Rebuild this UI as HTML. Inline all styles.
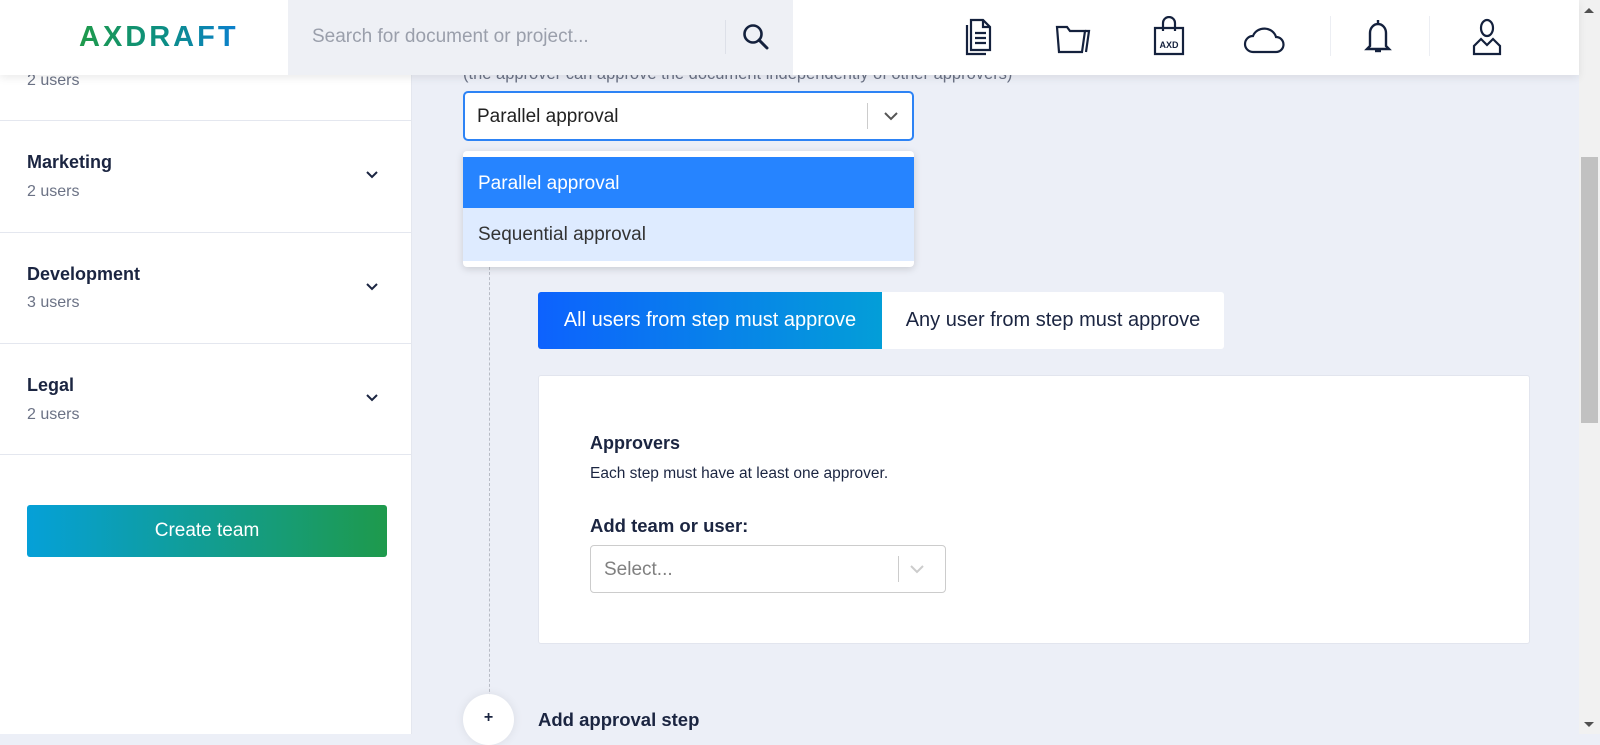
<!DOCTYPE html>
<html><head><meta charset="utf-8"><style>
*{box-sizing:border-box;margin:0;padding:0}
body{width:1600px;height:734px;overflow:hidden;background:#eceff7;font-family:"Liberation Sans",sans-serif;color:#1b2541;position:relative}
.abs{position:absolute}
#hdr{left:0;top:0;width:1579px;height:75px;background:#fff;box-shadow:0 3px 8px rgba(0,0,0,.08);z-index:5}
#search{left:288px;top:0;width:505px;height:75px;background:#eef0f5}
#side{left:0;top:0;width:412px;height:734px;background:#fff;border-right:1px solid #e4e7ef}
.row{position:absolute;left:0;width:411px;border-bottom:1px solid #e4e7ef}
.t{position:absolute;left:27px;font-size:18px;font-weight:bold;color:#1b2541}
.u{position:absolute;left:27px;font-size:16px;color:#6b7285}
.chev{position:absolute;left:365px}
#sb{left:1579px;top:0;width:21px;height:734px;background:#f1f1f1}
</style></head><body>
<div id="side" class="abs">
 <div class="u" style="top:72px">2 users</div>
 <div class="row" style="top:0;height:121px"></div>
 <div class="t" style="top:152px">Marketing</div><div class="u" style="top:183px">2 users</div>
 <div class="row" style="top:121px;height:112px"></div>
 <div class="t" style="top:264px">Development</div><div class="u" style="top:294px">3 users</div>
 <div class="row" style="top:233px;height:111px"></div>
 <div class="t" style="top:375px">Legal</div><div class="u" style="top:406px">2 users</div>
 <div class="row" style="top:344px;height:111px"></div>
 <svg class="chev" style="top:170px" width="14" height="10"><path d="M2 2l5 5 5-5" fill="none" stroke="#1b2541" stroke-width="2"/></svg>
 <svg class="chev" style="top:282px" width="14" height="10"><path d="M2 2l5 5 5-5" fill="none" stroke="#1b2541" stroke-width="2"/></svg>
 <svg class="chev" style="top:393px" width="14" height="10"><path d="M2 2l5 5 5-5" fill="none" stroke="#1b2541" stroke-width="2"/></svg>
 <div class="abs" style="left:27px;top:505px;width:360px;height:52px;border-radius:3px;background:linear-gradient(90deg,#05a0d8,#1e9a4c);color:#fff;font-size:19px;text-align:center;line-height:52px">Create team</div>
</div>

<div id="hdr" class="abs">
 <div class="abs" style="left:79px;top:21px;font-size:29px;font-weight:bold;letter-spacing:3px;background:linear-gradient(90deg,#1f9a4a,#0c8f80 50%,#0b7fd0);-webkit-background-clip:text;color:transparent">AXDRAFT</div>
 <div id="search" class="abs">
  <div class="abs" style="left:24px;top:26px;font-size:19px;color:#9a9fab">Search for document or project...</div>
  <div class="abs" style="left:437px;top:20px;width:1px;height:34px;background:#dde0e8"></div>
  <svg class="abs" style="left:453px;top:22px" width="32" height="32"><circle cx="12" cy="12" r="8.5" fill="none" stroke="#14213d" stroke-width="2.6"/><path d="M18 18l8 8" stroke="#14213d" stroke-width="3" stroke-linecap="round"/></svg>
 </div>
 <svg class="abs" style="left:964px;top:18px" width="30" height="38" fill="none" stroke="#14213d" stroke-width="2.2"><path d="M7 2h12l7 7v23H7z"/><path d="M19 2v7h7"/><path d="M3 7v29h19"/><path d="M11 15h11M11 20h11M11 25h11"/></svg>
 <svg class="abs" style="left:1055px;top:22px" width="36" height="32" fill="none" stroke="#14213d" stroke-width="2.2"><path d="M2 5h10l3 4h15l-3 21H4z"/><path d="M30 9h4l-3 21"/></svg>
 <svg class="abs" style="left:1152px;top:16px" width="34" height="40" fill="none" stroke="#14213d" stroke-width="2.2"><path d="M3 12h28v26H3z"/><path d="M11 15V7a6 6 0 0112 0v8"/><text x="17" y="32" font-size="9" font-weight="bold" fill="#14213d" stroke="none" text-anchor="middle" font-family="Liberation Sans">AXD</text></svg>
 <svg class="abs" style="left:1243px;top:24px" width="42" height="30" fill="none" stroke="#14213d" stroke-width="2.2"><path d="M10 28a8 8 0 010-16 12 11 0 0123 1 7.5 7.5 0 010 15z"/></svg>
 <div class="abs" style="left:1330px;top:16px;width:1px;height:40px;background:#eceef3"></div>
 <svg class="abs" style="left:1364px;top:16px" width="28" height="40" fill="none" stroke="#14213d" stroke-width="2.4"><path d="M14 4v3M6 30V17a8 9 0 0116 0v13l3 3H3z"/><path d="M11 35h6"/></svg>
 <div class="abs" style="left:1429px;top:16px;width:1px;height:40px;background:#eceef3"></div>
 <svg class="abs" style="left:1471px;top:18px" width="32" height="38" fill="none" stroke="#14213d" stroke-width="2.2"><ellipse cx="16" cy="10" rx="6" ry="8"/><path d="M3 36v-8l7-7 6 6 6-6 7 7v8z"/></svg>
</div>

<div class="abs" style="left:463px;top:65px;font-size:16.5px;color:#6b7285">(the approver can approve the document independently of other approvers)</div>
<div class="abs" style="left:463px;top:91px;width:451px;height:50px;background:#fff;border:2px solid #2d83f5;border-radius:5px">
 <div class="abs" style="left:12px;top:13px;font-size:19px;color:#222">Parallel approval</div>
 <div class="abs" style="left:402px;top:10px;width:1px;height:26px;background:#ccc"></div>
 <svg class="abs" style="left:418px;top:17px" width="16" height="12"><path d="M2 3l6 6 6-6" fill="none" stroke="#555" stroke-width="2"/></svg>
</div>
<div class="abs" style="left:489px;top:262px;height:450px;border-left:1px dashed #b8bcc6"></div>
<div class="abs" style="left:463px;top:151px;width:451px;height:116px;background:#fff;border-radius:4px;box-shadow:0 2px 8px rgba(0,0,0,.15);z-index:3">
 <div class="abs" style="left:0;top:6px;width:451px;height:51px;background:#2684ff;color:#fff;font-size:19px;padding:16px 15px">Parallel approval</div>
 <div class="abs" style="left:0;top:57px;width:451px;height:53px;background:#deebff;color:#333;font-size:19px;padding:16px 15px">Sequential approval</div>
</div>
<div class="abs" style="left:538px;top:292px;width:344px;height:57px;border-radius:3px 0 0 3px;background:linear-gradient(90deg,#0d62fe,#039ed8);color:#fff;font-size:20px;text-align:center;line-height:57px">All users from step must approve</div>
<div class="abs" style="left:882px;top:292px;width:342px;height:57px;background:#fff;border-radius:0 3px 3px 0;color:#1b2541;font-size:20px;text-align:center;line-height:57px">Any user from step must approve</div>
<div class="abs" style="left:538px;top:375px;width:992px;height:269px;background:#fff;border-radius:3px;border:1px solid #e2e5ee">
 <div class="abs" style="left:51px;top:57px;font-size:18px;font-weight:bold">Approvers</div>
 <div class="abs" style="left:51px;top:89px;font-size:15.5px;color:#1b2541">Each step must have at least one approver.</div>
 <div class="abs" style="left:51px;top:139px;font-size:18.5px;font-weight:bold">Add team or user:</div>
 <div class="abs" style="left:51px;top:169px;width:356px;height:48px;border:1px solid #ccc;border-radius:4px">
  <div class="abs" style="left:13px;top:13px;font-size:19px;color:#808080">Select...</div>
  <div class="abs" style="left:307px;top:10px;width:1px;height:26px;background:#ccc"></div>
  <svg class="abs" style="left:318px;top:17px" width="16" height="12"><path d="M2 3l6 6 6-6" fill="none" stroke="#ccc" stroke-width="2"/></svg>
 </div>
</div>
<div class="abs" style="left:463px;top:694px;width:51px;height:51px;border-radius:50%;background:#fff;box-shadow:0 0 10px rgba(0,0,0,.08);text-align:center;line-height:48px;font-size:16px;font-weight:bold">+</div>
<div class="abs" style="left:538px;top:709px;font-size:18.5px;font-weight:bold">Add approval step</div>
<div id="sb" class="abs">
 <div class="abs" style="left:5px;top:8px;width:0;height:0;border-left:5px solid transparent;border-right:5px solid transparent;border-bottom:5px solid #505050"></div>
 <div class="abs" style="left:2px;top:157px;width:17px;height:266px;background:#c1c1c1"></div>
 <div class="abs" style="left:5px;top:722px;width:0;height:0;border-left:5px solid transparent;border-right:5px solid transparent;border-top:5px solid #505050"></div>
</div>
</body></html>
